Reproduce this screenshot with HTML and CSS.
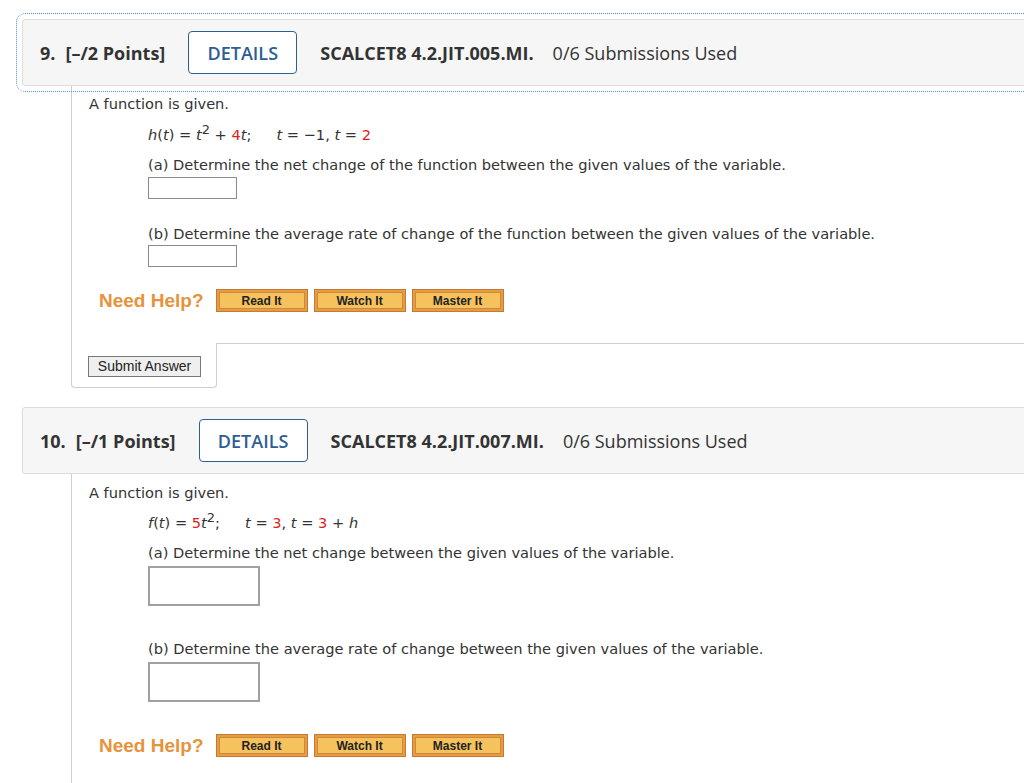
FILE: index.html
```html
<!DOCTYPE html>
<html>
<head>
<meta charset="utf-8">
<link rel="stylesheet" href="styles.css">
</head>
<body>
<div class="page">
  <section class="question">
    <div class="qhead focused">
      <span class="qnum">9.</span>
      <span class="qpts">[–/2 Points]</span>
      <span class="details">DETAILS</span>
      <span class="qcode">SCALCET8 4.2.JIT.005.MI.</span>
      <span class="qsubs">0/6 Submissions Used</span>
    </div>
    <div class="qbody q9">
      <p class="line first">A function is given.</p>
      <p class="line formula"><i>h</i>(<i>t</i>) = <i>t</i><sup>2</sup> + <span class="red">4</span><i>t</i>;<span class="sep"></span><i>t</i> = −1, <i>t</i> = <span class="red">2</span></p>
      <p class="line part">(a) Determine the net change of the function between the given values of the variable.</p>
      <div class="answer small"></div>
      <p class="line part b">(b) Determine the average rate of change of the function between the given values of the variable.</p>
      <div class="answer small b"></div>
      <div class="help">
        <span class="needhelp">Need Help?</span>
        <span class="hbtn"><span class="hin">Read It</span></span>
        <span class="hbtn"><span class="hin">Watch It</span></span>
        <span class="hbtn"><span class="hin">Master It</span></span>
      </div>
    </div>
    <div class="submitrow">
      <div class="submitcell"><span class="submit">Submit Answer</span></div>
      <div class="submitrest"></div>
    </div>
  </section>

  <section class="question second">
    <div class="qhead">
      <span class="qnum">10.</span>
      <span class="qpts">[–/1 Points]</span>
      <span class="details">DETAILS</span>
      <span class="qcode">SCALCET8 4.2.JIT.007.MI.</span>
      <span class="qsubs">0/6 Submissions Used</span>
    </div>
    <div class="qbody q10">
      <p class="line first">A function is given.</p>
      <p class="line formula"><i>f</i>(<i>t</i>) = <span class="red">5</span><i>t</i><sup>2</sup>;<span class="sep"></span><i>t</i> = <span class="red">3</span>, <i>t</i> = <span class="red">3</span> + <i>h</i></p>
      <p class="line part">(a) Determine the net change between the given values of the variable.</p>
      <div class="answer large"></div>
      <p class="line part b">(b) Determine the average rate of change between the given values of the variable.</p>
      <div class="answer large b"></div>
      <div class="help">
        <span class="needhelp">Need Help?</span>
        <span class="hbtn"><span class="hin">Read It</span></span>
        <span class="hbtn"><span class="hin">Watch It</span></span>
        <span class="hbtn"><span class="hin">Master It</span></span>
      </div>
    </div>
  </section>
</div>
</body>
</html>
```

FILE: styles.css
```css
html, body {
  margin: 0;
  padding: 0;
  overflow: hidden;
  background: #fff;
}
.page {
  padding: 19px 0 0 22px;
  width: 1060px;
}
.question.second {
  margin-top: 19px;
}
.qhead {
  display: flex;
  align-items: center;
  box-sizing: border-box;
  height: 67px;
  width: 1040px;
  padding-left: 17px;
  background: #f6f6f6;
  border: 1px solid #dcdcdc;
  border-radius: 3px;
  font-family: "Open Sans", "DejaVu Sans", sans-serif;
  font-size: 18px;
  color: #333;
}
.qhead.focused {
  outline: 1px dotted #4f8fdc;
  outline-offset: 5px;
}
.qnum {
  font-weight: 700;
  margin-right: 10px;
}
.qpts {
  font-weight: 700;
}
.details {
  box-sizing: border-box;
  width: 109px;
  height: 43px;
  margin-left: 23px;
  display: flex;
  align-items: center;
  justify-content: center;
  border: 1px solid #2f5f90;
  border-radius: 4px;
  background: #fff;
  color: #2c5e94;
  font-weight: 600;
}
.qcode {
  font-weight: 700;
  margin-left: 23px;
}
.qsubs {
  margin-left: 19px;
}
.qbody {
  margin-left: 49px;
  border-left: 1px solid #cfcfcf;
  padding-left: 17px;
  font-family: "DejaVu Sans", Verdana, sans-serif;
  font-size: 14.6px;
  color: #333;
}
.qbody.q9 {
  padding-top: 9px;
  padding-bottom: 31px;
}
.qbody.q10 {
  padding-top: 10px;
  padding-bottom: 40px;
}
.line {
  margin: 0;
  line-height: 18px;
  white-space: nowrap;
}
.formula {
  margin-left: 59px;
  margin-top: 13px;
}
.q10 .formula {
  margin-top: 12px;
}
.formula i {
  font-style: italic;
}
.formula sup {
  font-size: 13px;
  line-height: 0;
  vertical-align: 6px;
}
.sep {
  display: inline-block;
  width: 25px;
}
.red {
  color: #e0211b;
}
.part {
  margin-left: 59px;
  margin-top: 12px;
}
.q9 .part.b {
  margin-top: 26px;
}
.q10 .part.b {
  margin-top: 34px;
}
.answer {
  margin-left: 59px;
  box-sizing: border-box;
  background: #fff;
}
.answer.small {
  width: 89px;
  height: 22px;
  margin-top: 3px;
  border: 1px solid #8a8a8a;
}
.answer.small.b {
  margin-top: 2px;
}
.answer.large {
  width: 112px;
  height: 40px;
  margin-top: 4px;
  border: 2px solid #a0a0a0;
}
.help {
  display: flex;
  align-items: center;
  gap: 6px;
  margin-left: 10px;
  margin-top: 22px;
}
.q10 .help {
  margin-top: 32px;
}
.needhelp {
  font-family: "Liberation Sans", Arial, sans-serif;
  font-weight: 700;
  font-size: 19px;
  color: #e8923c;
  margin-right: 6px;
}
.hbtn {
  box-sizing: border-box;
  width: 92px;
  height: 23px;
  padding: 2px;
  background: #eb9a3e;
  border: 1px solid #c27b37;
  display: flex;
}
.hin {
  flex: 1;
  display: flex;
  align-items: center;
  justify-content: center;
  background: #f6c25e;
  border: 1px solid #c98a40;
  font-family: "Liberation Sans", Arial, sans-serif;
  font-weight: 700;
  font-size: 12px;
  color: #222;
}
.submitrow {
  display: flex;
  margin-left: 49px;
  width: 1000px;
}
.submitcell {
  box-sizing: border-box;
  width: 146px;
  height: 45px;
  border: 1px solid #cfcfcf;
  border-top: none;
  border-radius: 0 0 4px 4px;
  padding: 13px 0 0 16px;
}
.submit {
  display: inline-block;
  box-sizing: border-box;
  width: 113px;
  height: 21px;
  line-height: 19px;
  text-align: center;
  background: #efefef;
  border: 1px solid #787878;
  font-family: "Liberation Sans", Arial, sans-serif;
  font-size: 14px;
  color: #222;
}
.submitrest {
  flex: 1;
  border-top: 1px solid #cfcfcf;
}
```
